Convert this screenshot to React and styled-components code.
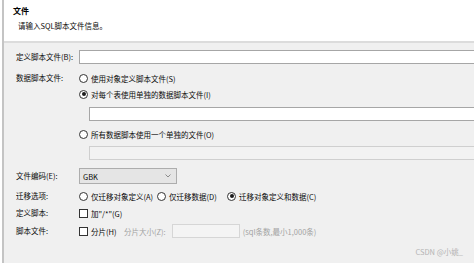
import React from 'react';
import styled, { createGlobalStyle } from 'styled-components';

const GlobalStyle = createGlobalStyle`
    html, body {
        margin: 0;
        padding: 0;
        background: #fff;
        overflow: hidden;
    }
    body {
        font-family: "Noto Sans CJK SC", "Noto Sans", sans-serif;
        font-size: 7.5px;
        color: #0a0a0a;
    }
`;

function App() {
    return (
        <Window>
            <GlobalStyle />
            <Frame>
                <Header>
                    <Title>文件</Title>
                    <Subtitle>请输入SQL脚本文件信息。</Subtitle>
                </Header>

                <Body>
                    <Row $h={14}>
                        <Label>定义脚本文件(B):</Label>
                        <TextBox />
                    </Row>

                    <Row $mt={6} $top>
                        <Label>数据脚本文件:</Label>
                        <Options>
                            <Radio label="使用对象定义脚本文件(S)" />
                            <Radio label="对每个表使用单独的数据脚本文件(I)" checked />
                            <TextBox $indent $mt={5} />
                            <Radio label="所有数据脚本使用一个单独的文件(O)" mt={5} />
                            <TextBox $indent $mt={4} $disabled />
                        </Options>
                    </Row>

                    <Row $mt={8} $h={16}>
                        <Label>文件编码(E):</Label>
                        <Combo>
                            <span>GBK</span>
                            <svg width="6" height="4" viewBox="0 0 6 4">
                                <polyline points="0.5,0.5 3,3 5.5,0.5" fill="none" stroke="#808080" strokeWidth="0.9" />
                            </svg>
                        </Combo>
                    </Row>

                    <Row $mt={4} $h={16}>
                        <Label>迁移选项:</Label>
                        <Radio label="仅迁移对象定义(A)" w={78} />
                        <Radio label="仅迁移数据(D)" w={70} />
                        <Radio label="迁移对象定义和数据(C)" checked />
                    </Row>

                    <Row $mt={1} $h={16}>
                        <Label>定义脚本:</Label>
                        <Check label={'加"/*"(G)'} />
                    </Row>

                    <Row $mt={3} $h={14}>
                        <Label>脚本文件:</Label>
                        <Check label="分片(H)" w={45} />
                        <Muted>分片大小(Z):</Muted>
                        <SizeBox />
                        <Muted $ml={3}>(sql条数,最小1,000条)</Muted>
                    </Row>
                </Body>
            </Frame>
            <Watermark>CSDN @小姚_</Watermark>
        </Window>
    );
}

function Radio({ label, checked, w, mt }) {
    return (
        <Choice $w={w} $mt={mt}>
            <Circle $checked={checked} />
            <span>{label}</span>
        </Choice>
    );
}

function Check({ label, w }) {
    return (
        <Choice $w={w}>
            <Box />
            <span>{label}</span>
        </Choice>
    );
}

export default App;


const Window = styled.div`
    position: relative;
    width: 474px;
    height: 263px;
    padding-left: 2px;
    box-sizing: border-box;
    overflow: hidden;
    background: #fff;
`;

const Frame = styled.div`
    display: flex;
    flex-direction: column;
    height: 100%;
    border-left: 2px solid #c4c4c4;
`;

const Header = styled.div`
    height: 43px;
    box-sizing: border-box;
    padding: 6px 0 0 9px;
    background: #fff;
    border-bottom: 2px solid #dcdcdc;
`;

const Title = styled.div`
    font-size: 8px;
    font-weight: 700;
    line-height: 10px;
    color: #000;
`;

const Subtitle = styled.div`
    margin: 5px 0 0 5px;
    line-height: 10px;
`;

const Body = styled.div`
    flex: 1;
    background: #f0f0f0;
    padding: 7px 0 0 12px;
`;

const Row = styled.div`
    display: flex;
    align-items: ${p => (p.$top ? 'flex-start' : 'center')};
    margin-top: ${p => p.$mt || 0}px;
    height: ${p => (p.$h ? `${p.$h}px` : 'auto')};
`;

const Label = styled.div`
    flex: none;
    width: 63px;
    line-height: 16px;
    white-space: nowrap;
`;

const Options = styled.div`
    display: flex;
    flex-direction: column;
    flex: 1;
`;

const TextBox = styled.div`
    box-sizing: border-box;
    height: 14px;
    flex: ${p => (p.$indent ? 'none' : 1)};
    margin-top: ${p => p.$mt || 0}px;
    margin-left: ${p => (p.$indent ? 10 : 0)}px;
    margin-right: -12px;
    background: ${p => (p.$disabled ? '#f2f2f2' : '#fff')};
    border: 1px solid ${p => (p.$disabled ? '#cfcfcf' : '#a6a6a6')};
`;

const Combo = styled.div`
    display: flex;
    align-items: center;
    justify-content: space-between;
    box-sizing: border-box;
    width: 98px;
    height: 16px;
    padding: 0 5px 0 3px;
    background: #e5e5e5;
    border: 1px solid #adadad;
`;

const Choice = styled.label`
    display: flex;
    align-items: center;
    gap: 3px;
    flex: none;
    height: 16px;
    width: ${p => (p.$w ? `${p.$w}px` : 'auto')};
    margin-top: ${p => p.$mt || 0}px;
    white-space: nowrap;
`;

const Circle = styled.span`
    position: relative;
    flex: none;
    width: 9px;
    height: 9px;
    box-sizing: border-box;
    border: 1px solid #333;
    border-radius: 50%;
    background: #fff;

    &::after {
        content: '';
        display: ${p => (p.$checked ? 'block' : 'none')};
        position: absolute;
        left: 1.5px;
        top: 1.5px;
        width: 4px;
        height: 4px;
        border-radius: 50%;
        background: #1a1a1a;
    }
`;

const Box = styled.span`
    flex: none;
    width: 9px;
    height: 9px;
    box-sizing: border-box;
    border: 1px solid #333;
    background: #fff;
`;

const Muted = styled.span`
    color: #a3a3a3;
    white-space: nowrap;
    margin-left: ${p => p.$ml || 0}px;
`;

const SizeBox = styled.div`
    box-sizing: border-box;
    width: 68px;
    height: 14px;
    margin-left: 6px;
    background: #f4f4f4;
    border: 1px solid #d6d6d6;
`;

const Watermark = styled.div`
    position: absolute;
    right: 11px;
    bottom: 6px;
    color: #b4b4b4;
    font-size: 7.5px;
    line-height: 10px;
`;
